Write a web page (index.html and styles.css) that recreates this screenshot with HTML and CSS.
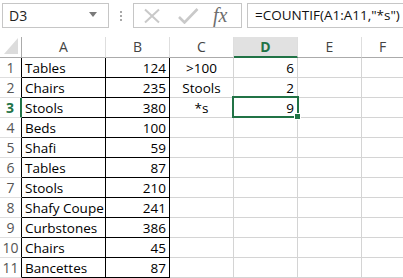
FILE: index.html
```html
<!DOCTYPE html>
<html>
<head>
<meta charset="utf-8">
<link rel="stylesheet" href="styles.css">
</head>
<body>
<div class="app">
  <div class="toolbar">
    <div class="namebox">
      <span class="name">D3</span>
      <svg class="caret" width="8" height="5" viewBox="0 0 8 5"><path d="M0 0H8L4 5Z" fill="#7a7a7a"/></svg>
    </div>
    <div class="grip"><i></i><i></i><i></i></div>
    <div class="fbtns">
      <svg class="ico" width="18" height="16" viewBox="0 0 18 16"><path d="M2 1.5L16 14.5M16 1.5L2 14.5" stroke="#c9c9c9" stroke-width="2" fill="none"/></svg>
      <svg class="ico" width="22" height="16" viewBox="0 0 22 16"><path d="M2 9L7.5 14.5L20.5 1" stroke="#c9c9c9" stroke-width="2.6" fill="none"/></svg>
      <span class="fx">fx</span>
    </div>
    <div class="finput">=COUNTIF(A1:A11,"*s")</div>
  </div>
  <div class="sheet">
    <div class="corner"><svg width="14" height="16" viewBox="0 0 14 16"><path d="M14 0V16H0Z" fill="#dcdcdc"/></svg></div>
    <div class="ch">A</div><div class="ch">B</div><div class="ch">C</div><div class="ch sel">D</div><div class="ch">E</div><div class="ch last">F</div>

    <div class="rh">1</div><div class="c t">Tables</div><div class="c t num">124</div><div class="c mid">&gt;100</div><div class="c num">6</div><div class="c"></div><div class="c last"></div>
    <div class="rh">2</div><div class="c t">Chairs</div><div class="c t num">235</div><div class="c mid">Stools</div><div class="c num">2</div><div class="c"></div><div class="c last"></div>
    <div class="rh rsel">3</div><div class="c t">Stools</div><div class="c t num">380</div><div class="c mid">*s</div><div class="c num active">9</div><div class="c"></div><div class="c last"></div>
    <div class="rh">4</div><div class="c t">Beds</div><div class="c t num">100</div><div class="c"></div><div class="c"></div><div class="c"></div><div class="c last"></div>
    <div class="rh">5</div><div class="c t">Shafi</div><div class="c t num">59</div><div class="c"></div><div class="c"></div><div class="c"></div><div class="c last"></div>
    <div class="rh">6</div><div class="c t">Tables</div><div class="c t num">87</div><div class="c"></div><div class="c"></div><div class="c"></div><div class="c last"></div>
    <div class="rh">7</div><div class="c t">Stools</div><div class="c t num">210</div><div class="c"></div><div class="c"></div><div class="c"></div><div class="c last"></div>
    <div class="rh">8</div><div class="c t">Shafy Coupe</div><div class="c t num">241</div><div class="c"></div><div class="c"></div><div class="c"></div><div class="c last"></div>
    <div class="rh">9</div><div class="c t">Curbstones</div><div class="c t num">386</div><div class="c"></div><div class="c"></div><div class="c"></div><div class="c last"></div>
    <div class="rh">10</div><div class="c t">Chairs</div><div class="c t num">45</div><div class="c"></div><div class="c"></div><div class="c"></div><div class="c last"></div>
    <div class="rh">11</div><div class="c t">Bancettes</div><div class="c t num">87</div><div class="c"></div><div class="c"></div><div class="c"></div><div class="c last"></div>
  </div>
</div>
</body>
</html>
```
FILE: styles.css
```css
html, body {
  margin: 0;
  padding: 0;
  background: #fff;
  overflow: hidden;
}
.app {
  width: 403px;
  height: 278px;
  overflow: hidden;
  font-family: "Open Sans", "Noto Sans", sans-serif;
  color: #000;
}
.toolbar {
  height: 37px;
  box-sizing: border-box;
  padding: 3px 0 0 2px;
  display: flex;
  align-items: flex-start;
}
.namebox {
  width: 107px;
  height: 25px;
  box-sizing: border-box;
  border: 1px solid #c6c6c6;
  display: flex;
  align-items: center;
  justify-content: space-between;
  padding: 0 11px 0 6px;
}
.name {
  font-size: 14px;
  color: #222;
}
.caret {
  display: block;
  margin-top: -3px;
}
.grip {
  width: 24px;
  height: 25px;
  display: flex;
  flex-direction: column;
  align-items: center;
  justify-content: center;
  gap: 2px;
}
.grip i {
  display: block;
  width: 2px;
  height: 2px;
  background: #a8a8a8;
}
.fbtns {
  width: 109px;
  height: 25px;
  box-sizing: border-box;
  border: 1px solid #c6c6c6;
  display: flex;
  align-items: center;
  padding-left: 9px;
}
.fbtns .ico {
  display: block;
}
.fbtns .ico + .ico {
  margin-left: 16px;
}
.fx {
  font-family: "Liberation Serif", serif;
  font-style: italic;
  font-size: 20px;
  color: #6e6e6e;
  margin-left: 14px;
  line-height: 20px;
  margin-top: -2px;
}
.finput {
  flex: 1;
  margin-left: 5px;
  margin-right: -4px;
  height: 25px;
  box-sizing: border-box;
  border: 1px solid #c6c6c6;
  padding-left: 7px;
  font-size: 13.5px;
  line-height: 23px;
  white-space: nowrap;
  overflow: hidden;
  color: #111;
}
.sheet {
  display: grid;
  grid-template-columns: 22px 84px 64px 64px 64px 64px 1fr;
  grid-template-rows: 21px repeat(11, 20px);
  font-size: 13.5px;
}
.sheet > div {
  box-sizing: border-box;
  border-right: 1px solid #d4d4d4;
  border-bottom: 1px solid #d4d4d4;
  line-height: 20px;
  white-space: nowrap;
  overflow: visible;
}
.corner {
  display: flex;
  align-items: flex-end;
  justify-content: flex-end;
  padding: 0 3px 3px 0;
  border-right-color: #ababab !important;
  border-bottom-color: #ababab !important;
}
.corner svg {
  display: block;
}
.ch {
  text-align: center;
  color: #444;
  font-size: 14px;
  border-right-color: #dedede !important;
  border-bottom-color: #ababab !important;
}
.ch.sel {
  background: #e1e1e1;
  color: #217346;
  font-weight: 700;
  border-bottom: 2px solid #217346 !important;
  line-height: 19px !important;
}
.sheet > .last {
  border-right: none;
}
.rh {
  text-align: center;
  color: #555;
  font-size: 14px;
  border-right: 1px solid #000 !important;
  border-bottom-color: #dedede !important;
}
.rh.rsel {
  color: #217346;
  font-weight: 700;
  border-right: 2px solid #217346 !important;
}
.c {
  padding: 0 3px;
}
.c.t {
  border-right-color: #000;
  border-bottom-color: #000;
}
.num {
  text-align: right;
}
.mid {
  text-align: center;
}
.active {
  position: relative;
}
.active::after {
  content: "";
  position: absolute;
  left: -2px;
  top: -2px;
  right: -2px;
  bottom: -1px;
  border: 2px solid #217346;
}
.active::before {
  content: "";
  position: absolute;
  right: -4px;
  bottom: -3px;
  width: 5px;
  height: 5px;
  background: #217346;
  border: 1px solid #fff;
  z-index: 2;
}
```
